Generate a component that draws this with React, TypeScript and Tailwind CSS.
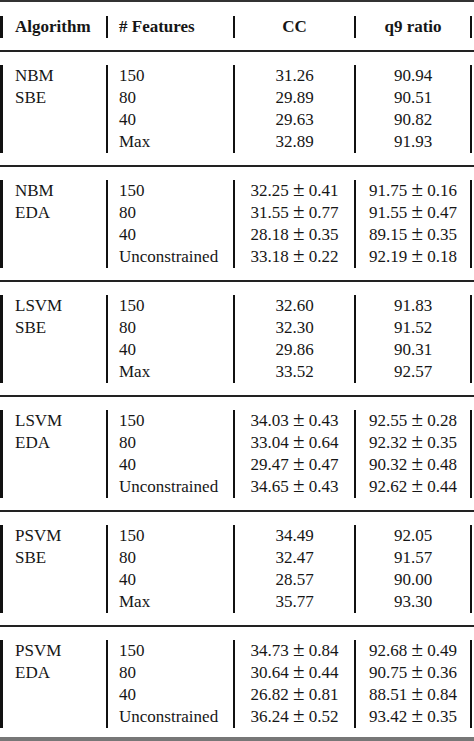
type Group = {
  algo: [string, string];
  rows: [string, string, string][];
};

const GROUPS: Group[] = [
  {
    algo: ['NBM', 'SBE'],
    rows: [
      ['150', '31.26', '90.94'],
      ['80', '29.89', '90.51'],
      ['40', '29.63', '90.82'],
      ['Max', '32.89', '91.93'],
    ],
  },
  {
    algo: ['NBM', 'EDA'],
    rows: [
      ['150', '32.25 ± 0.41', '91.75 ± 0.16'],
      ['80', '31.55 ± 0.77', '91.55 ± 0.47'],
      ['40', '28.18 ± 0.35', '89.15 ± 0.35'],
      ['Unconstrained', '33.18 ± 0.22', '92.19 ± 0.18'],
    ],
  },
  {
    algo: ['LSVM', 'SBE'],
    rows: [
      ['150', '32.60', '91.83'],
      ['80', '32.30', '91.52'],
      ['40', '29.86', '90.31'],
      ['Max', '33.52', '92.57'],
    ],
  },
  {
    algo: ['LSVM', 'EDA'],
    rows: [
      ['150', '34.03 ± 0.43', '92.55 ± 0.28'],
      ['80', '33.04 ± 0.64', '92.32 ± 0.35'],
      ['40', '29.47 ± 0.47', '90.32 ± 0.48'],
      ['Unconstrained', '34.65 ± 0.43', '92.62 ± 0.44'],
    ],
  },
  {
    algo: ['PSVM', 'SBE'],
    rows: [
      ['150', '34.49', '92.05'],
      ['80', '32.47', '91.57'],
      ['40', '28.57', '90.00'],
      ['Max', '35.77', '93.30'],
    ],
  },
  {
    algo: ['PSVM', 'EDA'],
    rows: [
      ['150', '34.73 ± 0.84', '92.68 ± 0.49'],
      ['80', '30.64 ± 0.44', '90.75 ± 0.36'],
      ['40', '26.82 ± 0.81', '88.51 ± 0.84'],
      ['Unconstrained', '36.24 ± 0.52', '93.42 ± 0.35'],
    ],
  },
];

// mean ± std: the ± glyph is drawn a bit larger, like a math symbol
function Value({ text }: { text: string }) {
  const [mean, std] = text.split(' ± ');
  if (!std) return <>{text}</>;
  return (
    <>
      {mean} <span className="text-[21px] leading-[0]">±</span> {std}
    </>
  );
}

function Rule() {
  return <div className="h-[2px] bg-[#222]" />;
}

function GroupBlock({ group, last }: { group: Group; last?: boolean }) {
  return (
    <div className={last ? 'pt-[13px] pb-[9px]' : 'pt-[13px] pb-[12px]'}>
      <div className="flex">
        <div className="w-[106px] border-l-[3px] border-[#111] pl-[12px]">
          <div>{group.algo[0]}</div>
          <div>{group.algo[1]}</div>
        </div>
        <div className="w-[127px] border-l-2 border-[#111] pl-[11px]">
          {group.rows.map((r, i) => (
            <div key={i}>{r[0]}</div>
          ))}
        </div>
        <div className="w-[121px] border-l-2 border-[#111] text-center">
          {group.rows.map((r, i) => (
            <div key={i}>
              <Value text={r[1]} />
            </div>
          ))}
        </div>
        <div className="w-[118px] border-l-2 border-r-2 border-[#111] text-center">
          {group.rows.map((r, i) => (
            <div key={i}>
              <Value text={r[2]} />
            </div>
          ))}
        </div>
      </div>
    </div>
  );
}

export default function App() {
  return (
    <div className="w-[474px] h-[741px] bg-white text-[#161616] font-['Liberation_Serif','Times_New_Roman',serif] text-[17px] leading-[22px] overflow-hidden">
      <div className="h-[2px] bg-[#333]" />

      {/* Header */}
      <div className="pt-[14px] pb-[12px]">
        <div className="flex font-bold">
          <div className="w-[106px] border-l-[3px] border-[#111] pl-[12px]">Algorithm</div>
          <div className="w-[127px] border-l-2 border-[#111] pl-[11px]"># Features</div>
          <div className="w-[121px] border-l-2 border-[#111] text-center">CC</div>
          <div className="w-[118px] border-l-2 border-r-2 border-[#111] text-center">q9 ratio</div>
        </div>
      </div>

      {GROUPS.map((g, i) => (
        <div key={i}>
          <Rule />
          <GroupBlock group={g} last={i === GROUPS.length - 1} />
        </div>
      ))}

      <div className="h-[4px] bg-[#777]" />
    </div>
  );
}
